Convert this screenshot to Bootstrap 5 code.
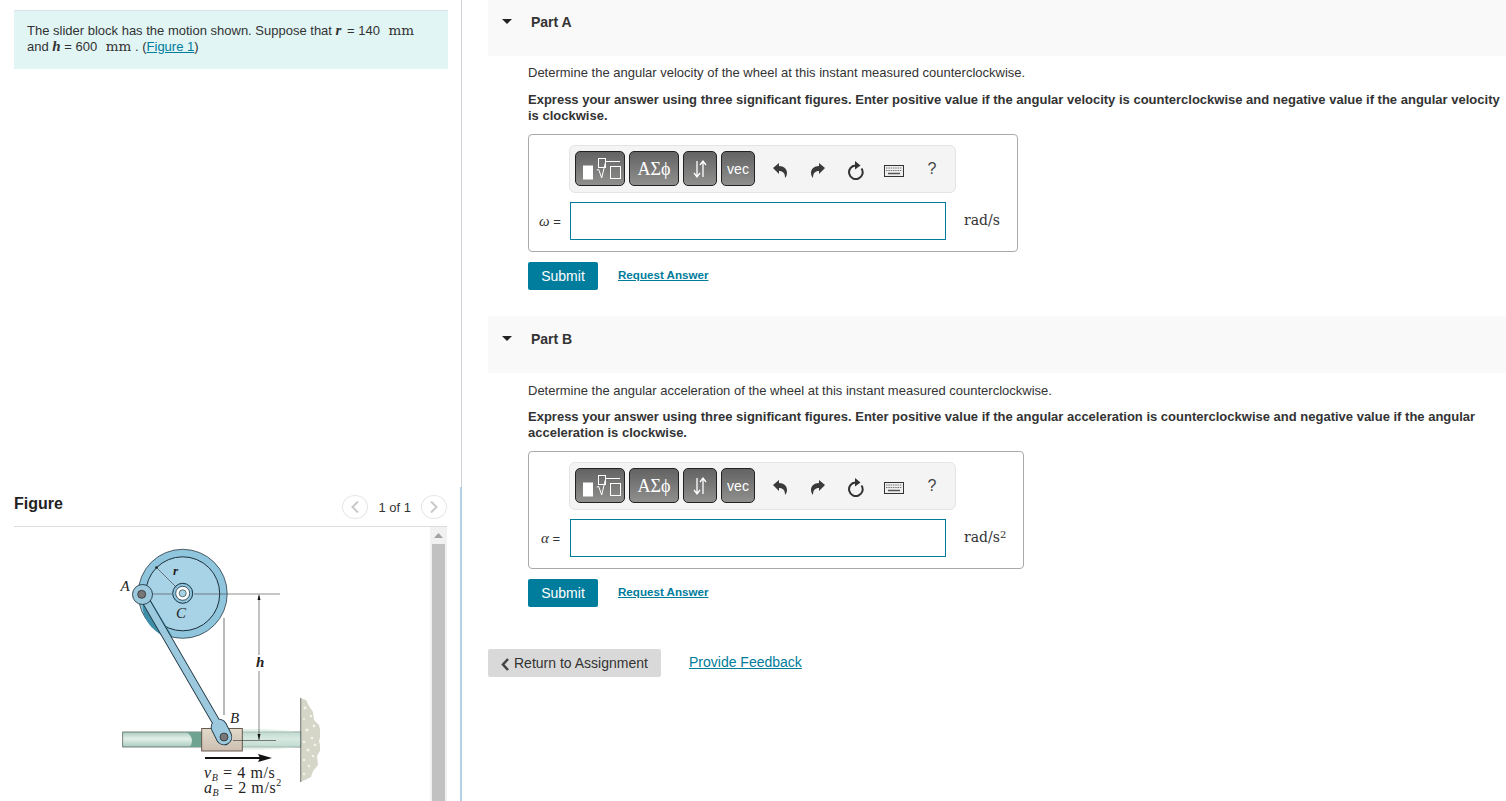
<!DOCTYPE html>
<html lang="en"><head><meta charset="utf-8"><title>Part A and B</title>
<link href="https://cdn.jsdelivr.net/npm/bootstrap@5.3.0/dist/css/bootstrap.min.css" rel="stylesheet">
<style>
html,body{height:100%;overflow:hidden}
body{font-family:"Liberation Sans",Arial,sans-serif;font-size:13px;line-height:16px;color:#333}
a{color:#007c9c}
.lpane{width:462px;height:801px;border-right:1px solid #cdd3d9;padding-left:14px}
.probbox{width:434px;height:59px;margin-top:10px;background:#e1f5f5;border-top:1px solid #dce3e6;padding:12px 13px 0;line-height:16px}
.mth{font-family:"Liberation Serif",serif}
.mthi{font-family:"Liberation Serif",serif;font-style:italic;font-weight:700;font-size:15px;line-height:0}
.mthr{letter-spacing:2px}
.mmu{font-family:"DejaVu Serif",serif;font-size:13.5px;margin-left:5px;line-height:0}
.figsec{height:314px;margin-left:-14px;padding-left:14px;border-right:2px solid #b5d0e4;margin-right:-1px}
.fighead{height:40px;width:433px;border-bottom:1px solid #dcdcdc;padding-top:8px}
.figttl{font-size:16px;font-weight:700;line-height:16px;color:#222;margin-top:1px}
.navcirc{width:26px;height:24px;border:1px solid #e6e6e6;border-radius:50%;background:#fff}
.cnt{margin:1px 10px 0;font-size:13px;line-height:24px}
.figbody{width:433px;height:274px}
.figsvg{margin-left:96px;width:210px;height:274px;display:block}
.sbar{width:17px;background:#f1f1f1}
.sbtop{height:17px}
.sbthumb{background:#c1c1c1;margin:0 2px}
.rpane{padding-left:26px}
.parthead{height:56px;background:#f9f9f9;padding:14px 0 0 14px}
.parthead.pb{height:57px;padding-top:15px}
.ptitle{font-weight:700;font-size:14px;line-height:16px;margin-left:19px;color:#333}
.tri{width:0;height:0;border-left:5px solid transparent;border-right:5px solid transparent;border-top:5px solid #222;margin-top:5px}
.pbody{padding-left:40px}
.qtxt{margin:0;padding-top:9px;line-height:16px}
.qtxtb{padding-top:10px}
.instr{margin:11px 0 0;font-weight:700;line-height:16px}
.instrb{margin-top:10px}
.ansbox{height:118px;margin-top:10px;border:1px solid #aaa;border-radius:4px;padding:10px 0 0 10px}
.w490{width:490px}.w496{width:496px}
.tbar{width:387px;height:48px;margin-left:30px;background:#f4f4f4;border:1px solid #e4e4e4;border-radius:6px;padding:5px;gap:4px;align-items:flex-start}
.tbtn{height:35px;border:1px solid #222;border-radius:5px;background:linear-gradient(#636363,#8f8f8e);color:#fff;display:flex;align-items:center;justify-content:center;padding:0;flex-shrink:0}
.tb50{width:50px}.tb34{width:34px}
.tserif{font-family:"Liberation Serif",serif;font-size:18px}
.tsans{font-size:14px}
.ticons{margin-left:2px;height:39px}
.ticn{width:38px;display:flex;justify-content:center;align-items:center;flex-shrink:0}
.qm{font-size:16px;color:#444;padding-bottom:4px}
.ansrow{margin-top:9px;height:38px}
.lab{width:31px;font-size:13px;color:#333;text-align:right;padding-right:10px;white-space:nowrap}
.lab .mth{font-size:15px}
.ansin{width:376px;height:38px;border:1px solid #007c9c;border-radius:0;background:#fff;padding:0 6px}
.unit{margin-left:18px;margin-top:-2px;font-family:"DejaVu Serif",serif;font-size:14px;color:#333}
.unit sup{font-size:10px;top:-.45em;line-height:0}
.subrow{margin-top:10px;height:28px}
.subbtn{width:70px;height:28px;background:#007c9c;border:0;border-radius:2px;color:#fff;font-size:14px;line-height:28px;padding:0}
.subbtn:hover{background:#007c9c;color:#fff}
.reqa{margin-left:20px;font-weight:700;font-size:11.6px;position:relative;top:-1px}
.spc{height:26px}.spcb{height:42px}
.retbtn{width:173px;height:28px;background:#d9d9d9;border:0;border-radius:2px;color:#333;font-size:14px;line-height:28px;padding:0 0 0 13px;text-align:left}
.retbtn:hover{background:#d9d9d9;color:#333}
.fb{margin-left:28px;font-size:14px;position:relative;top:-1px}
</style></head><body>
<div class="d-flex">
 <div class="lpane d-flex flex-column flex-shrink-0">
  <div class="probbox">The slider block has the motion shown. Suppose that <span class="mthi mthr">r</span> = 140 <span class="mmu">mm</span><br>and <span class="mthi">h</span> = 600 <span class="mmu">mm</span> . (<a href="#">Figure 1</a>)</div>
  <div class="figsec mt-auto">
   <div class="fighead d-flex align-items-start">
    <div class="figttl flex-grow-1">Figure</div>
    <div class="navcirc d-flex align-items-center justify-content-center"><svg width="10" height="14" viewBox="0 0 10 14"><path d="M8 1.500 2.500 7 8 12.500" fill="none" stroke="#c9c9c9" stroke-width="2"/></svg></div>
    <div class="cnt">1 of 1</div>
    <div class="navcirc d-flex align-items-center justify-content-center"><svg width="10" height="14" viewBox="0 0 10 14"><path d="M2 1.500 7.500 7 2 12.500" fill="none" stroke="#c9c9c9" stroke-width="2"/></svg></div>
   </div>
   <div class="figbody d-flex">
    <div class="flex-grow-1 overflow-hidden">
     <svg class="figsvg" viewBox="110 527 210 274" xmlns="http://www.w3.org/2000/svg">
      <defs><linearGradient id="rail" x1="0" y1="0" x2="0" y2="1"><stop offset="0" stop-color="#a9cbbd"/><stop offset=".45" stop-color="#e4f0ea"/><stop offset="1" stop-color="#a9cbbd"/></linearGradient>
      <linearGradient id="blk" x1="0" y1="0" x2="0" y2="1"><stop offset="0" stop-color="#e0d9ca"/><stop offset="1" stop-color="#cdbfb2"/></linearGradient></defs>
      <path d="M300 698l6 2 3 6 4 6 1 8 5 5 2 9-2 7 2 8-4 7 1 9-5 6-2 6-6 3-5 2z" fill="#d5d5c8"/>
      <g fill="#f3f3ea"><circle cx="305" cy="708" r="1.400"/><circle cx="311" cy="716" r="1.200"/><circle cx="304" cy="719" r="1"/><circle cx="314" cy="726" r="1.400"/><circle cx="307" cy="730" r="1.600"/><circle cx="312" cy="738" r="1.300"/><circle cx="304" cy="742" r="1.200"/><circle cx="315" cy="745" r="1.400"/><circle cx="308" cy="750" r="1.500"/><circle cx="313" cy="756" r="1.200"/><circle cx="304" cy="760" r="1.300"/><circle cx="309" cy="766" r="1.300"/><circle cx="304" cy="774" r="1.200"/></g>
      <path d="M300.700 698v84" stroke="#888" stroke-width="1.200"/>
      <circle cx="182.700" cy="593.800" r="44.500" fill="#8fc6de" stroke="#2d3b44" stroke-width=".8"/>
      <circle cx="182.700" cy="593.800" r="37" fill="#a8d2e6" stroke="#1d2f3a" stroke-width="1"/>
      <path d="M146 587l4 12 22 37c-6 2-8 1-11-1-7-5-13-10-17-20-2-8-2-20 2-28z" fill="#3f8ea8"/>
      <circle cx="182.700" cy="593.300" r="10" fill="#8fc6de" stroke="#16303c" stroke-width="1"/>
      <circle cx="182.700" cy="593.300" r="7" fill="#fff" stroke="#16303c" stroke-width=".8"/>
      <circle cx="182.700" cy="593.300" r="3.500" fill="#a8d2e6" stroke="#344" stroke-width=".7"/>
      <path d="M151 594h21M194 594h86" stroke="#444" stroke-width=".6" fill="none"/>
      <path d="M156.500 567.500 176.500 587.500" stroke="#333" stroke-width=".6"/><circle cx="156.500" cy="567.500" r="1.300" fill="#222"/>
      <path d="M224 618v97" stroke="#8a8a8a" stroke-width="1.200"/>
      <rect x="122.700" y="732" width="178" height="15" fill="url(#rail)" stroke="#56685f" stroke-width=".8"/>
      <path d="M187 732c6 5 6 10 3 15h12v-15z" fill="#6fa391"/>
      <path d="M242 729c20 0 40 1 58 3v15c-18 2-38 3-58 3z" fill="#cfe5dc" opacity=".6"/>
      <rect x="201.700" y="728.500" width="40.600" height="22.500" fill="url(#blk)" stroke="#5b4b3e" stroke-width=".9"/>
      <g stroke-linecap="round" fill="none">
       <path d="M143 596 215 720" stroke="#1f3540" stroke-width="8.500"/>
       <path d="M219 727 224 737" stroke="#1f3540" stroke-width="16.500"/>
       <path d="M143 596 215 720" stroke="#9cc9de" stroke-width="6.800"/>
       <path d="M219 727 224 737" stroke="#9cc9de" stroke-width="14.800"/>
      </g>
      <circle cx="142.500" cy="594.500" r="10" fill="#9cc9de" stroke="#1f3540" stroke-width=".9"/>
      <circle cx="141.700" cy="594.300" r="4" fill="#777" stroke="#222" stroke-width=".7"/>
      <circle cx="224" cy="737" r="4" fill="#777" stroke="#222" stroke-width=".7"/>
      <path d="M233 740.500h43" stroke="#333" stroke-width=".6"/>
      <path d="M259 596v59M259 671v69" stroke="#333" stroke-width=".6"/>
      <path d="M259 594l-1.500 6h3zM259 740l-1.500-6h3z" fill="#111"/>
      <path d="M205 758h55" stroke="#111" stroke-width="2"/><path d="M272 758l-14-4 2 4-2 4z" fill="#111"/>
      <g font-family="Liberation Serif,serif" fill="#222" font-size="15">
       <text x="120.500" y="591" font-style="italic">A</text>
       <text x="173" y="575" font-style="italic" font-weight="700" font-size="13">r</text>
       <text x="176" y="618" font-style="italic">C</text>
       <text x="256" y="667" font-style="italic" font-weight="700">h</text>
       <text x="230" y="723" font-style="italic">B</text>
       <text x="204" y="778" font-size="16" letter-spacing=".6"><tspan font-style="italic">v</tspan><tspan font-style="italic" font-size="10" dy="3">B</tspan><tspan dy="-3"> = 4 m/s</tspan></text>
       <text x="204" y="793" font-size="16" letter-spacing=".6"><tspan font-style="italic">a</tspan><tspan font-style="italic" font-size="10" dy="3">B</tspan><tspan dy="-3"> = 2 m/s</tspan><tspan font-size="10" dy="-7">2</tspan></text>
      </g>
     </svg>
    </div>
    <div class="sbar d-flex flex-column flex-shrink-0">
     <div class="sbtop d-flex justify-content-center align-items-center"><svg width="9" height="5" viewBox="0 0 9 5"><path d="M4.500 0 9 5H0z" fill="#a3a3a3"/></svg></div>
     <div class="sbthumb flex-grow-1"></div>
    </div>
   </div>
  </div>
 </div>
 <div class="rpane flex-grow-1">
  <div class="parthead d-flex"><span class="tri"></span><span class="ptitle">Part A</span></div>
  <div class="pbody">
   <p class="qtxt">Determine the angular velocity of the wheel at this instant measured counterclockwise.</p>
   <p class="instr">Express your answer using three significant figures. Enter positive value if the angular velocity is counterclockwise and negative value if the angular velocity is clockwise.</p>
   <div class="ansbox w490">
    <div class="tbar d-flex">
     <div class="tbtn tb50"><svg width="44" height="26" viewBox="0 0 44 26"><rect x="5" y="9.500" width="10" height="14" fill="#fff"/><g fill="none" stroke="#fff" stroke-width="1"><rect x="20.500" y="2.500" width="7" height="9"/><path d="M18.700 14l2-.5 3 8.500 4-16.500H42"/><rect x="32.500" y="10.500" width="10" height="12"/></g></svg></div>
     <div class="tbtn tb50 tserif">ΑΣϕ</div>
     <div class="tbtn tb34"><svg width="16" height="22" viewBox="0 0 16 22"><path d="M5 3v15M2 15l3 4 3-4M11 19V4M8 7l3-4 3 4" fill="none" stroke="#fff" stroke-width="1.300"/></svg></div>
     <div class="tbtn tb34 tsans">vec</div>
     <div class="ticons d-flex">
      <div class="ticn"><svg width="14" height="15" viewBox="0 0 14 15"><path d="M0 5 6 0v3c5 0 8 3 8 7 0 2-1 4-2 5 0-5-2-7-6-7v3z" fill="#3a3a3a"/></svg></div>
      <div class="ticn"><svg width="14" height="15" viewBox="0 0 14 15"><path d="M14 5 8 0v3C3 3 0 6 0 10c0 2 1 4 2 5 0-5 2-7 6-7v3z" fill="#3a3a3a"/></svg></div>
      <div class="ticn"><svg width="17" height="19" viewBox="0 0 17 19"><path d="M7.500 4.500a6.800 6.800 0 1 0 6 3" fill="none" stroke="#333" stroke-width="2"/><path d="M7 0v8.500l5.500-4z" fill="#333"/></svg></div>
      <div class="ticn"><svg width="20" height="12" viewBox="0 0 20 12"><rect x=".5" y=".5" width="19" height="11" fill="#eee" stroke="#333"/><path d="M2 3h16M2 5.500h16" stroke="#777" stroke-width="1.200" stroke-dasharray="1.500 .8"/><path d="M4 8.500h12" stroke="#555" stroke-width="1.500"/></svg></div>
      <div class="ticn qm">?</div>
     </div>
    </div>
    <div class="ansrow d-flex align-items-center">
     <span class="lab"><span class="mth fst-italic">ω</span> =</span>
     <input class="ansin" type="text" aria-label="omega">
     <span class="unit">rad/s</span>
    </div>
   </div>
   <div class="subrow d-flex"><button class="btn subbtn">Submit</button><a class="reqa align-self-center" href="#">Request Answer</a></div>
  </div>
  <div class="spc"></div>
  <div class="parthead pb d-flex"><span class="tri"></span><span class="ptitle">Part B</span></div>
  <div class="pbody">
   <p class="qtxt qtxtb">Determine the angular acceleration of the wheel at this instant measured counterclockwise.</p>
   <p class="instr instrb">Express your answer using three significant figures. Enter positive value if the angular acceleration is counterclockwise and negative value if the angular acceleration is clockwise.</p>
   <div class="ansbox w496">
    <div class="tbar d-flex">
     <div class="tbtn tb50"><svg width="44" height="26" viewBox="0 0 44 26"><rect x="5" y="9.500" width="10" height="14" fill="#fff"/><g fill="none" stroke="#fff" stroke-width="1"><rect x="20.500" y="2.500" width="7" height="9"/><path d="M18.700 14l2-.5 3 8.500 4-16.500H42"/><rect x="32.500" y="10.500" width="10" height="12"/></g></svg></div>
     <div class="tbtn tb50 tserif">ΑΣϕ</div>
     <div class="tbtn tb34"><svg width="16" height="22" viewBox="0 0 16 22"><path d="M5 3v15M2 15l3 4 3-4M11 19V4M8 7l3-4 3 4" fill="none" stroke="#fff" stroke-width="1.300"/></svg></div>
     <div class="tbtn tb34 tsans">vec</div>
     <div class="ticons d-flex">
      <div class="ticn"><svg width="14" height="15" viewBox="0 0 14 15"><path d="M0 5 6 0v3c5 0 8 3 8 7 0 2-1 4-2 5 0-5-2-7-6-7v3z" fill="#3a3a3a"/></svg></div>
      <div class="ticn"><svg width="14" height="15" viewBox="0 0 14 15"><path d="M14 5 8 0v3C3 3 0 6 0 10c0 2 1 4 2 5 0-5 2-7 6-7v3z" fill="#3a3a3a"/></svg></div>
      <div class="ticn"><svg width="17" height="19" viewBox="0 0 17 19"><path d="M7.500 4.500a6.800 6.800 0 1 0 6 3" fill="none" stroke="#333" stroke-width="2"/><path d="M7 0v8.500l5.500-4z" fill="#333"/></svg></div>
      <div class="ticn"><svg width="20" height="12" viewBox="0 0 20 12"><rect x=".5" y=".5" width="19" height="11" fill="#eee" stroke="#333"/><path d="M2 3h16M2 5.500h16" stroke="#777" stroke-width="1.200" stroke-dasharray="1.500 .8"/><path d="M4 8.500h12" stroke="#555" stroke-width="1.500"/></svg></div>
      <div class="ticn qm">?</div>
     </div>
    </div>
    <div class="ansrow d-flex align-items-center">
     <span class="lab"><span class="mth fst-italic">α</span> =</span>
     <input class="ansin" type="text" aria-label="alpha">
     <span class="unit">rad/s<sup>2</sup></span>
    </div>
   </div>
   <div class="subrow d-flex"><button class="btn subbtn">Submit</button><a class="reqa align-self-center" href="#">Request Answer</a></div>
  </div>
  <div class="spcb"></div>
  <div class="d-flex align-items-center"><button class="btn retbtn"><svg width="9" height="13" viewBox="0 0 9 13" class="me-1"><path d="M7 1 2 6.500 7 12" fill="none" stroke="#444" stroke-width="2.600"/></svg>Return to Assignment</button><a class="fb" href="#">Provide Feedback</a></div>
 </div>
</div>
</body></html>
